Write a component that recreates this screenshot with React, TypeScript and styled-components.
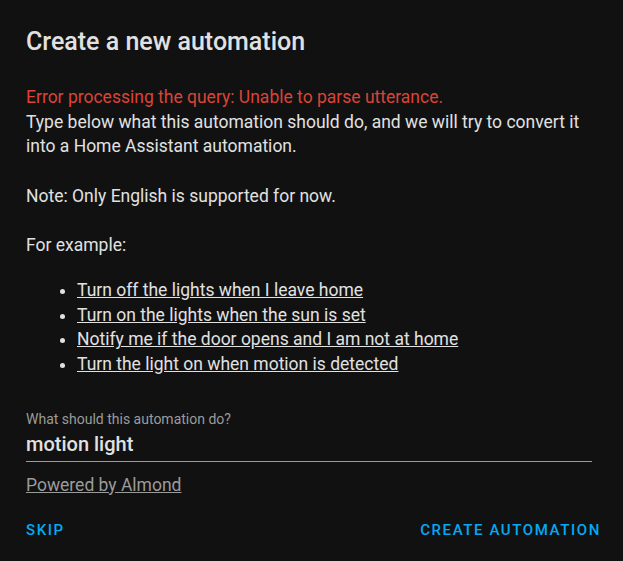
import styled, { createGlobalStyle } from "styled-components";

const GlobalStyle = createGlobalStyle`
  body {
    margin: 0;
    background: #111111;
    font-family: Roboto, "Noto Sans", sans-serif;
  }
`;

const Dialog = styled.div`
  width: 623px;
  height: 561px;
  box-sizing: border-box;
  padding: 24px 22px 0 26px;
  color: #e1e1e1;
  display: flex;
  flex-direction: column;
`;

const Title = styled.h2`
  margin: 3px 0 0;
  font-size: 25px;
  font-weight: 500;
  line-height: 30px;
`;

const Body = styled.div`
  margin-top: 28px;
  font-size: 17.5px;
  line-height: 24.7px;
`;

const ErrorText = styled.div`
  color: #db4437;
`;

const Examples = styled.ul`
  margin: 20px 0 0;
  padding-left: 51px;
  li a {
    color: #e1e1e1;
    text-decoration: underline;
  }
`;

const Field = styled.div`
  margin-top: 33px;
  margin-right: 9px;
  border-bottom: 1px solid #9b9b9b;
  padding-bottom: 3px;
`;

const Label = styled.div`
  font-size: 14px;
  line-height: 18px;
  color: #9b9b9b;
`;

const Value = styled.div`
  margin-top: 2px;
  font-size: 20px;
  font-weight: 500;
  line-height: 28px;
  color: #e1e1e1;
`;

const Powered = styled.a`
  display: inline-block;
  margin-top: 11px;
  font-size: 17.5px;
  line-height: 24px;
  color: #9b9b9b;
  text-decoration: underline;
  align-self: flex-start;
`;

const Actions = styled.div`
  display: flex;
  justify-content: space-between;
  margin-top: 24px;
`;

const Button = styled.button`
  background: none;
  border: none;
  padding: 0;
  font-family: Roboto, sans-serif;
  font-size: 15px;
  font-weight: 500;
  letter-spacing: 1.6px;
  color: #03a9f4;
  text-transform: uppercase;
  cursor: pointer;
`;

const examples = [
  "Turn off the lights when I leave home",
  "Turn on the lights when the sun is set",
  "Notify me if the door opens and I am not at home",
  "Turn the light on when motion is detected",
];

export default function App() {
  return (
    <>
      <GlobalStyle />
      <Dialog>
        <Title>Create a new automation</Title>
        <Body>
          <ErrorText>Error processing the query: Unable to parse utterance.</ErrorText>
          Type below what this automation should do, and we will try to convert it
          into a Home Assistant automation.
          <br />
          <br />
          Note: Only English is supported for now.
          <br />
          <br />
          For example:
          <Examples>
            {examples.map((e) => (
              <li key={e}>
                <a href="#">{e}</a>
              </li>
            ))}
          </Examples>
        </Body>
        <Field>
          <Label>What should this automation do?</Label>
          <Value>motion light</Value>
        </Field>
        <Powered href="#">Powered by Almond</Powered>
        <Actions>
          <Button>Skip</Button>
          <Button>Create automation</Button>
        </Actions>
      </Dialog>
    </>
  );
}
